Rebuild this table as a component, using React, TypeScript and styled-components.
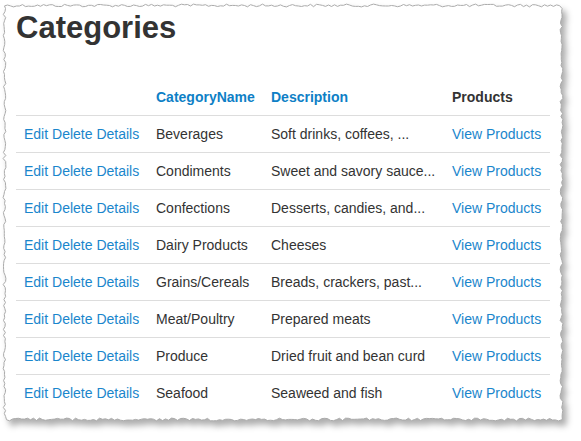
import React from "react";
import styled, { createGlobalStyle } from "styled-components";

const GlobalStyle = createGlobalStyle`
  html, body { margin: 0; padding: 0; background: #ffffff; }
  body { font-family: "Liberation Sans", Arial, sans-serif; font-size: 14px; color: #333333; }
`;

const Page = styled.div`
  padding: 5px 0 0 4px;
  width: 581px;
  height: 441px;
  box-sizing: border-box;
`;

const Paper = styled.div`
  position: relative;
  width: 558px;
  height: 415px;
  box-sizing: border-box;
  padding: 1px 12px 0 12px;
`;

const Edge = styled.svg`
  position: absolute;
  left: 0;
  top: 0;
  overflow: visible;
  pointer-events: none;
  filter: drop-shadow(4px 5px 3px rgba(0, 0, 0, 0.32));
`;

const Content = styled.div`
  position: relative;
`;

const Title = styled.h1`
  margin: 0 0 33px 0;
  font-size: 31px;
  line-height: 36px;
  font-weight: bold;
  color: #333333;
  padding-top: 4px;
`;

const Table = styled.table`
  border-collapse: collapse;
  width: 534px;
  table-layout: fixed;
`;

const Th = styled.th<{ $link?: boolean }>`
  text-align: left;
  font-weight: bold;
  padding: 8px;
  line-height: 20px;
  color: ${(p) => (p.$link ? "#0e7fc6" : "#333333")};
  border-bottom: 1px solid #dddddd;
`;

const Td = styled.td`
  padding: 8px;
  line-height: 20px;
  white-space: nowrap;
  overflow: hidden;
`;

const Row = styled.tr<{ $first?: boolean }>`
  & > td {
    border-top: ${(p) => (p.$first ? "none" : "1px solid #dddddd")};
  }
`;

const Link = styled.a`
  color: #1a86cc;
  text-decoration: none;
`;

const rows = [
  ["Beverages", "Soft drinks, coffees, ..."],
  ["Condiments", "Sweet and savory sauce..."],
  ["Confections", "Desserts, candies, and..."],
  ["Dairy Products", "Cheeses"],
  ["Grains/Cereals", "Breads, crackers, past..."],
  ["Meat/Poultry", "Prepared meats"],
  ["Produce", "Dried fruit and bean curd"],
  ["Seafood", "Seaweed and fish"],
];

function jaggedPath(w: number, h: number): string {
  let seed = 12345;
  const rnd = () => {
    seed = (seed * 1103515245 + 12345) & 0x7fffffff;
    return seed / 0x7fffffff;
  };
  const j = () => (rnd() - 0.5) * 2.8;
  const pts: string[] = [];
  const step = 3;
  for (let x = 0; x <= w; x += step) pts.push(`${x},${(j()).toFixed(1)}`);
  for (let y = step; y <= h; y += step) pts.push(`${(w + j()).toFixed(1)},${y}`);
  for (let x = w - step; x >= 0; x -= step) pts.push(`${x},${(h + j()).toFixed(1)}`);
  for (let y = h - step; y > 0; y -= step) pts.push(`${(j()).toFixed(1)},${y}`);
  return "M" + pts.join(" L") + " Z";
}

const W = 558;
const H = 415;
const edgePath = jaggedPath(W - 1, H - 1);

export default function App() {
  return (
    <>
      <GlobalStyle />
      <Page>
        <Paper>
          <Edge width={W} height={H} viewBox={`0 0 ${W} ${H}`}>
            <path d={edgePath} transform="translate(0.5,0.5)" fill="#ffffff" stroke="#aaaaaa" strokeWidth="1" />
          </Edge>
          <Content>
            <Title>Categories</Title>
            <Table>
              <colgroup>
                <col style={{ width: 132 }} />
                <col style={{ width: 115 }} />
                <col style={{ width: 181 }} />
                <col style={{ width: 106 }} />
              </colgroup>
              <thead>
                <tr>
                  <Th></Th>
                  <Th $link>CategoryName</Th>
                  <Th $link>Description</Th>
                  <Th>Products</Th>
                </tr>
              </thead>
              <tbody>
                {rows.map(([name, desc], i) => (
                  <Row key={name} $first={i === 0}>
                    <Td>
                      <Link href="#">Edit</Link> <Link href="#">Delete</Link> <Link href="#">Details</Link>
                    </Td>
                    <Td>{name}</Td>
                    <Td>{desc}</Td>
                    <Td>
                      <Link href="#">View Products</Link>
                    </Td>
                  </Row>
                ))}
              </tbody>
            </Table>
          </Content>
        </Paper>
      </Page>
    </>
  );
}
